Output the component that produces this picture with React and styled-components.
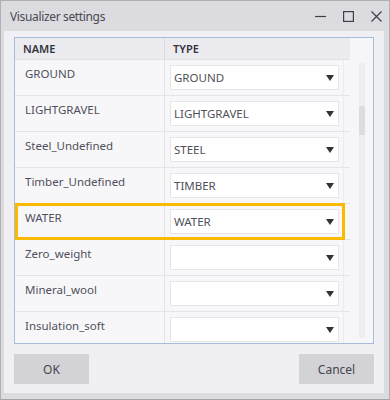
import React from "react";
import styled, { createGlobalStyle } from "styled-components";

const Global = createGlobalStyle`
  html, body { margin: 0; padding: 0; background: #d6d6da; }
  * { box-sizing: border-box; }
  body { font-family: "Noto Sans", "Open Sans", sans-serif; }
`;

const Window = styled.div`
  width: 390px;
  height: 400px;
  display: flex;
  flex-direction: column;
  background: #dcdce0;
  border: 1px solid #b0b0b4;
  border-bottom-color: #a4a4a8;
`;

const TitleBar = styled.div`
  height: 30px;
  flex: none;
  display: flex;
  align-items: center;
  padding-left: 9px;
  padding-right: 7px;
`;

const Title = styled.div`
  flex: 1;
  font-size: 12px;
  color: #4a4a52;
  letter-spacing: -0.35px;
`;

const Controls = styled.div`
  display: flex;
  align-items: center;
  gap: 17px;
`;

const CtrlIcon = styled.svg`
  width: 11px;
  height: 11px;
  display: block;
`;

const Body = styled.div`
  flex: 1;
  display: flex;
  flex-direction: column;
  margin: 0 5px 6px 3px;
  background: #f0f0f4;
  padding: 6px 10px 9px 10px;
  min-height: 0;
`;

const Table = styled.div`
  flex: 1;
  min-height: 0;
  display: flex;
  border: 1px solid #a6bcda;
  background: #f7f7fa;
  overflow: hidden;
`;

const Grid = styled.div`
  flex: 1;
  display: flex;
  flex-direction: column;
`;

const HeaderRow = styled.div`
  height: 22px;
  flex: none;
  display: grid;
  grid-template-columns: 150px 1fr;
  background: #ebebf0;
  border-bottom: 1px solid #e0e0e5;
`;

const HeaderCell = styled.div`
  display: flex;
  align-items: center;
  padding-left: ${(p) => p.$pad}px;
  font-size: 11px;
  font-weight: 600;
  color: #35353d;
  border-right: ${(p) => (p.$divider ? "1px solid #dcdce2" : "none")};
`;

const Row = styled.div`
  position: relative;
  height: 36px;
  flex: none;
  display: grid;
  grid-template-columns: 150px 1fr;
  border-bottom: 1px solid #e3e3e8;
  ${(p) =>
    p.$highlight &&
    `
    &::after {
      content: "";
      position: absolute;
      left: 0;
      top: -1px;
      right: 5px;
      bottom: -1px;
      border: 3px solid #fbb900;
      pointer-events: none;
    }
  `}
`;

const NameCell = styled.div`
  padding: 6px 0 0 10px;
  font-size: 11.5px;
  line-height: 16px;
  color: #50505a;
  border-right: 1px solid #e3e3e8;
`;

const TypeCell = styled.div`
  display: flex;
  align-items: center;
  padding: 0 4px 0 5px;
  margin-right: 6px;
  border-right: 1px solid #ececf0;
`;

const Select = styled.div`
  flex: 1;
  height: 25px;
  display: flex;
  align-items: center;
  justify-content: space-between;
  background: #ffffff;
  border: 1px solid #e6e6ea;
  padding: 0 3px 0 3px;
  font-size: 11.5px;
  color: #50505a;
`;

const Arrow = styled.span`
  width: 0;
  height: 0;
  border-left: 4.5px solid transparent;
  border-right: 4.5px solid transparent;
  border-top: 6px solid #32323a;
  margin-right: 1px;
`;

const ScrollCol = styled.div`
  width: 23px;
  flex: none;
  display: flex;
  flex-direction: column;
  align-items: center;
  background: #f6f6f9;
  padding: 25px 0 5px 1px;
`;

const Track = styled.div`
  width: 6px;
  flex: 1;
  background: #eeeef1;
  padding-top: 43px;
`;

const Thumb = styled.div`
  height: 29px;
  background: #dcdce0;
`;

const Footer = styled.div`
  flex: none;
  display: flex;
  justify-content: space-between;
  margin-top: 10px;
`;

const Button = styled.div`
  width: 75px;
  height: 30px;
  display: flex;
  align-items: center;
  justify-content: center;
  background: #d3d3d7;
  font-size: 12px;
  color: #45454d;
`;

const rows = [
  ["GROUND", "GROUND"],
  ["LIGHTGRAVEL", "LIGHTGRAVEL"],
  ["Steel_Undefined", "STEEL"],
  ["Timber_Undefined", "TIMBER"],
  ["WATER", "WATER", true],
  ["Zero_weight", ""],
  ["Mineral_wool", ""],
  ["Insulation_soft", ""],
];

export default function App() {
  return (
    <>
      <Global />
      <Window>
        <TitleBar>
          <Title>Visualizer settings</Title>
          <Controls>
            <CtrlIcon viewBox="0 0 11 11">
              <path d="M0 5.5 H11" stroke="#3f3f46" strokeWidth="1.2" />
            </CtrlIcon>
            <CtrlIcon viewBox="0 0 11 11">
              <rect x="0.6" y="0.6" width="9.8" height="9.8" fill="none" stroke="#3f3f46" strokeWidth="1.2" />
            </CtrlIcon>
            <CtrlIcon viewBox="0 0 11 11">
              <path d="M0.5 0.5 L10.5 10.5 M10.5 0.5 L0.5 10.5" stroke="#3f3f46" strokeWidth="1.2" />
            </CtrlIcon>
          </Controls>
        </TitleBar>
        <Body>
          <Table>
            <Grid>
              <HeaderRow>
                <HeaderCell $pad={8} $divider>NAME</HeaderCell>
                <HeaderCell $pad={8}>TYPE</HeaderCell>
              </HeaderRow>
              {rows.map(([name, type, hl]) => (
                <Row key={name} $highlight={hl}>
                  <NameCell>{name}</NameCell>
                  <TypeCell>
                    <Select>
                      <span>{type}</span>
                      <Arrow />
                    </Select>
                  </TypeCell>
                </Row>
              ))}
            </Grid>
            <ScrollCol>
              <Track>
                <Thumb />
              </Track>
            </ScrollCol>
          </Table>
          <Footer>
            <Button>OK</Button>
            <Button>Cancel</Button>
          </Footer>
        </Body>
      </Window>
    </>
  );
}
